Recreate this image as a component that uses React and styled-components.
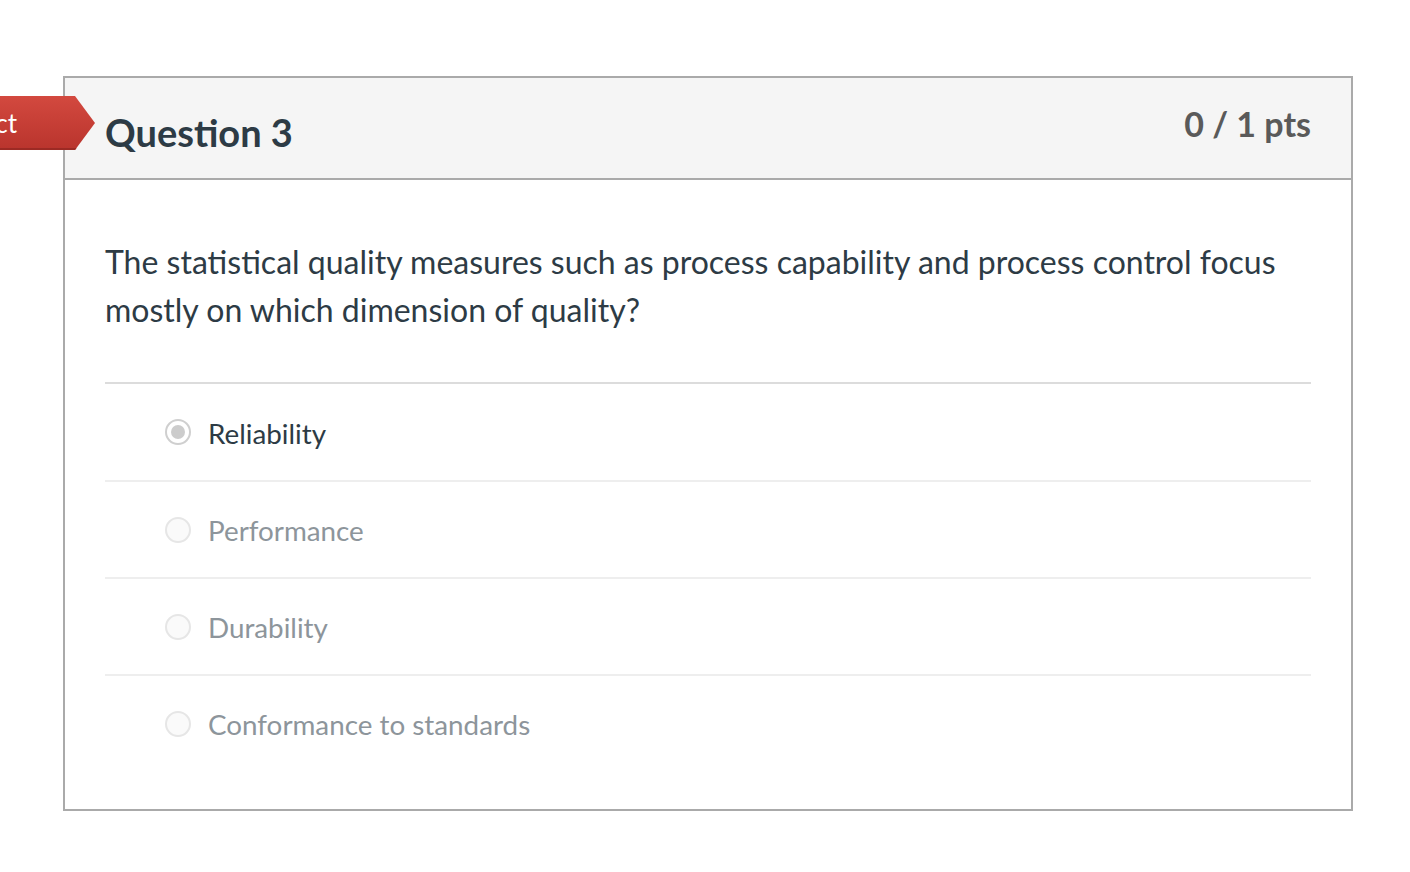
import React from "react";
import styled, { createGlobalStyle } from "styled-components";

const GlobalStyle = createGlobalStyle`
  * { box-sizing: border-box; }
  body {
    margin: 0;
    background: #fff;
    font-family: Lato, "Open Sans", "Liberation Sans", sans-serif;
    color: #2d3b45;
    overflow: hidden;
  }
`;

const Page = styled.div`
  padding: 76px 57px 0 63px;
`;

const Card = styled.div`
  position: relative;
  width: 1290px;
  border: 2px solid #aaaaaa;
  background: #fff;
`;

const Flag = styled.div`
  position: absolute;
  top: 18px;
  left: -190px;
  width: 220px;
  height: 54px;
  padding-right: 78px;
  display: flex;
  align-items: center;
  justify-content: flex-end;
  color: #fff;
  font-size: 26px;
  background: linear-gradient(#d3493f, #b9342d);
  clip-path: polygon(0 0, 200px 0, 220px 50%, 200px 100%, 0 100%);
  box-shadow: inset 0 -2px 0 #9c2a24;
`;

const Header = styled.div`
  height: 102px;
  padding: 0 40px;
  display: flex;
  justify-content: space-between;
  align-items: flex-start;
  background: #f5f5f5;
  border-bottom: 2px solid #aaaaaa;
`;

const Title = styled.h2`
  margin: 0;
  padding-top: 32px;
  font-size: 38px;
  font-weight: 700;
  color: #2d3b45;
  line-height: 1.2;
`;

const Points = styled.div`
  padding-top: 26px;
  font-size: 34px;
  font-weight: 700;
  color: #5a5a5a;
  line-height: 1.2;
`;

const Body = styled.div`
  padding: 58px 40px 38px;
`;

const QuestionText = styled.p`
  margin: 0 0 48px;
  font-size: 32px;
  line-height: 48px;
  color: #2d3b45;
`;

const Answers = styled.div`
  border-top: 2px solid #dcdcdc;
`;

const Row = styled.div`
  height: ${(p) => (p.first ? "96px" : "97px")};
  padding-left: 60px;
  display: flex;
  align-items: center;
  gap: 17px;
  border-top: ${(p) => (p.first ? "none" : "2px solid #eeeeee")};
`;

const Radio = styled.span`
  width: 26px;
  height: 26px;
  border-radius: 50%;
  flex: none;
  border: 2px solid ${(p) => (p.checked ? "#cfcfcf" : "#e6e6e6")};
  background: ${(p) => (p.checked ? "#fff" : "#fafafa")};
  display: flex;
  align-items: center;
  justify-content: center;
  &::after {
    content: "";
    width: 14px;
    height: 14px;
    border-radius: 50%;
    background: ${(p) => (p.checked ? "#cccccc" : "transparent")};
  }
`;

const Label = styled.span`
  font-size: 27.8px;
  color: ${(p) => (p.checked ? "#2d3b45" : "#8d959b")};
  margin-top: 2px;
`;

const answers = [
  { text: "Reliability", checked: true },
  { text: "Performance" },
  { text: "Durability" },
  { text: "Conformance to standards" },
];

export default function App() {
  return (
    <Page>
      <GlobalStyle />
      <Card>
        <Flag>Incorrect</Flag>
        <Header>
          <Title>Question 3</Title>
          <Points>0 / 1 pts</Points>
        </Header>
        <Body>
          <QuestionText>
            The statistical quality measures such as process capability and
            process control focus mostly on which dimension of quality?
          </QuestionText>
          <Answers>
            {answers.map((a, i) => (
              <Row key={a.text} first={i === 0}>
                <Radio checked={a.checked} />
                <Label checked={a.checked}>{a.text}</Label>
              </Row>
            ))}
          </Answers>
        </Body>
      </Card>
    </Page>
  );
}
